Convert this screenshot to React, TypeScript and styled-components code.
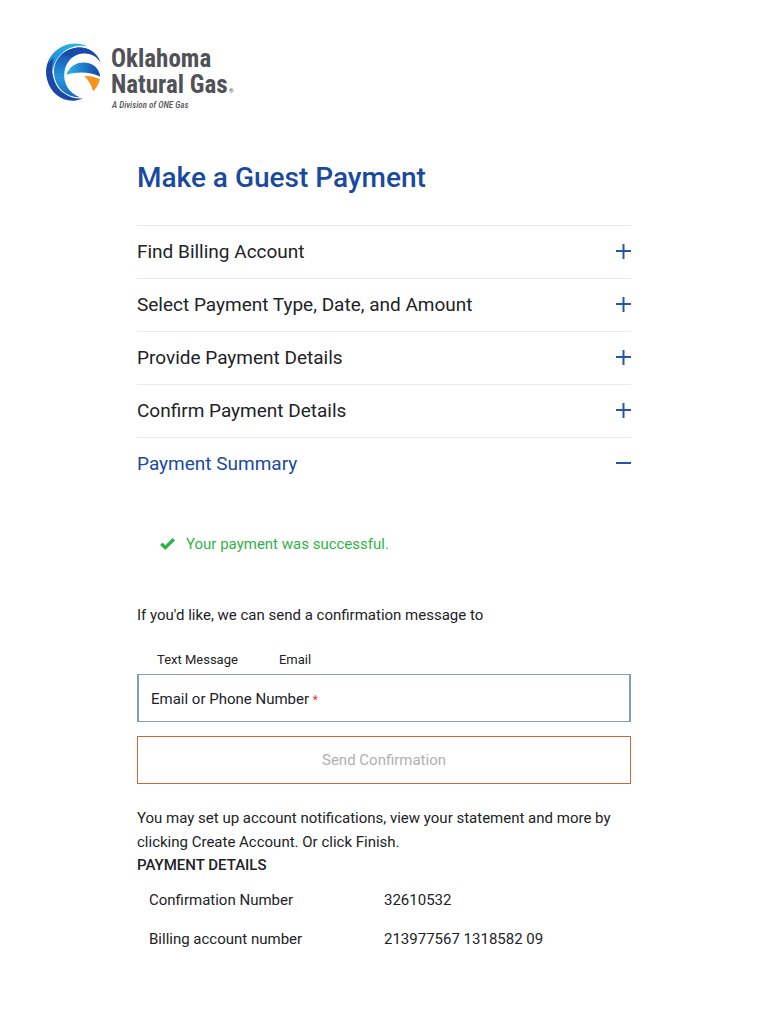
import React, { useState } from "react";
import styled, { createGlobalStyle } from "styled-components";

const GlobalStyle = createGlobalStyle`
  *, *::before, *::after { box-sizing: border-box; }
  body {
    margin: 0;
    background: #fff;
    color: #212326;
    font-family: Roboto, "Liberation Sans", sans-serif;
    font-size: 15px;
    line-height: 24px;
  }
`;

const Header = styled.header`
  padding: 40px 44px 0;
`;

const LogoLink = styled.a`
  display: block;
  width: 196px;
  height: 72px;
`;

const Main = styled.main`
  max-width: 768px;
  margin: 0 auto;
  padding: 44px 137px 52px;
`;

const Title = styled.h1`
  margin: 0 0 25px;
  font-size: 28px;
  line-height: 44px;
  font-weight: 500;
  color: #1a4a9f;
`;

const SectionHeading = styled.h2`
  margin: 0;
  border-top: 1px solid #e9e9eb;
`;

const SectionButton = styled.button<{ $open: boolean }>`
  display: flex;
  align-items: center;
  justify-content: space-between;
  width: 100%;
  height: 52px;
  padding: 0;
  border: 0;
  background: none;
  font: inherit;
  font-size: 19px;
  font-weight: 400;
  text-align: left;
  color: ${(p) => (p.$open ? "#1a4a9f" : "#212326")};
  cursor: pointer;
`;

const Success = styled.p`
  display: flex;
  align-items: center;
  gap: 11px;
  margin: 42px 0 47px;
  padding-left: 23px;
  color: #2fb344;
`;

const Text = styled.p`
  margin: 0;
`;

const Channels = styled.fieldset`
  display: flex;
  gap: 41px;
  margin: 21px 0 2px;
  padding: 0 20px;
  border: 0;
  font-size: 13px;
`;

const Channel = styled.label`
  cursor: pointer;
`;

const HiddenRadio = styled.input`
  position: absolute;
  opacity: 0;
  pointer-events: none;
`;

const Field = styled.div`
  position: relative;
`;

const FieldLabel = styled.label`
  position: absolute;
  top: 13px;
  left: 14px;
  pointer-events: none;
`;

const Required = styled.span`
  font-size: 12px;
  color: #f5304d;
`;

const TextInput = styled.input`
  display: block;
  width: 100%;
  height: 48px;
  padding: 0 14px;
  border: 1px solid #879dc0;
  border-width: 1px 2px;
  border-radius: 0;
  background: #fff;
  font: inherit;
  color: inherit;
`;

const SendButton = styled.button`
  display: block;
  width: 100%;
  height: 48px;
  margin: 14px 0 22px;
  border: 1px solid #dc6238;
  border-radius: 0;
  background: #fff;
  font: inherit;
  color: #b0b0b0;
`;

const DetailsTitle = styled.h3`
  margin: 0;
  font-size: 15px;
  line-height: 22px;
  font-weight: 500;
`;

const Details = styled.table`
  width: 100%;
  margin-top: 4px;
  border-collapse: collapse;
  table-layout: fixed;
`;

const DetailName = styled.th`
  width: 50%;
  height: 39px;
  padding: 0 12px;
  font-weight: 400;
  text-align: left;
`;

const DetailValue = styled.td`
  padding: 0;
`;

function Logo() {
  return (
    <svg width="196" height="72" viewBox="0 0 196 72" role="img" aria-label="Oklahoma Natural Gas">
      <defs>
        <linearGradient id="cyan" x1="0" y1="1" x2="1" y2="0">
          <stop offset="0" stopColor="#1d7fd0" />
          <stop offset="1" stopColor="#2cc0f0" />
        </linearGradient>
        <linearGradient id="leaf" x1="0" y1="0" x2="1" y2="0">
          <stop offset="0" stopColor="#2ab8ec" />
          <stop offset="0.9" stopColor="#164fac" />
        </linearGradient>
        <linearGradient id="ring" x1="0" y1="0" x2="0" y2="1">
          <stop offset="0" stopColor="#1a4ba9" />
          <stop offset="0.2" stopColor="#1c5fbb" />
          <stop offset="0.6" stopColor="#2399de" />
          <stop offset="1" stopColor="#1a66bf" />
        </linearGradient>
      </defs>
      <g transform="translate(-4 -4) scale(0.3333)">
        <path d="M45 47C22 69 13 99 21 130C31 171 65 197 104 194C113 193 121 191 128 187C89 190 53 167 42 131C33 103 36 78 52 59Z" fill="#1848a8" />
        <path d="M143 32C111 15 70 22 43 49C34 59 29 68 26 80C33 73 39 68 42 64C37 78 36 93 38 106C42 71 66 42 101 32C115 28 130 29 143 32Z" fill="url(#cyan)" />
        <path d="M182 80C169 43 131 25 92 39C57 52 39 82 42 114C46 156 80 184 119 184C86 169 70 143 73 111C76 77 101 54 131 52C153 51 171 62 182 80Z" fill="url(#ring)" />
        <path d="M182 80C169 43 131 25 92 39C80 43 70 50 62 58C77 57 91 62 96 64C108 55 119 52 131 52C153 51 171 62 182 80Z" fill="#1a4ba9" />
        <path d="M79 116C88 91 112 76 139 80C162 83 178 99 181 122C149 107 114 106 79 116Z" fill="url(#leaf)" />
        <path d="M132 119Q156 119 180 129Q175 151 159 166Q154 140 132 119Z" fill="#f7941f" />
      </g>
      <g fill="#515258" fontFamily='"Roboto Condensed", "Liberation Sans Narrow", sans-serif' fontWeight="700">
        <text x="67" y="27" fontSize="25">Oklahoma</text>
        <text x="67" y="53" fontSize="25">Natural Gas</text>
        <text x="185" y="53" fontSize="6">®</text>
      </g>
      <text
        x="68"
        y="68"
        fontSize="9"
        fontStyle="italic"
        fontWeight="500"
        fill="#55565b"
        fontFamily='"Roboto Condensed", "Liberation Sans Narrow", sans-serif'
      >
        A Division of ONE Gas
      </text>
    </svg>
  );
}

function ToggleIcon({ open }: { open: boolean }) {
  return (
    <svg width="15" height="16" viewBox="0 0 15 16" fill="none" stroke="#2455a8" strokeWidth="2" aria-hidden="true">
      <path d="M0 7H15" />
      {!open && <path d="M7.5 0V15" />}
    </svg>
  );
}

const sections = [
  "Find Billing Account",
  "Select Payment Type, Date, and Amount",
  "Provide Payment Details",
  "Confirm Payment Details",
  "Payment Summary",
];

const details = [
  ["Confirmation Number", "32610532"],
  ["Billing account number", "213977567 1318582 09"],
];

export default function App() {
  const [contact, setContact] = useState("");
  return (
    <>
      <GlobalStyle />
      <Header>
        <LogoLink href="#">
          <Logo />
        </LogoLink>
      </Header>
      <Main>
        <Title>Make a Guest Payment</Title>
        {sections.map((name, i) => {
          const open = i === sections.length - 1;
          return (
            <SectionHeading key={name}>
              <SectionButton type="button" $open={open} aria-expanded={open}>
                {name}
                <ToggleIcon open={open} />
              </SectionButton>
            </SectionHeading>
          );
        })}
        <Success role="status">
          <svg width="15" height="12" viewBox="0 0 15 12" fill="none" stroke="#2fb344" strokeWidth="3.4" aria-hidden="true">
            <path d="M1.2 5.8L5.3 9.6L13.8 1.3" />
          </svg>
          Your payment was successful.
        </Success>
        <Text>If you'd like, we can send a confirmation message to</Text>
        <Channels aria-label="Confirmation method">
          <Channel>
            <HiddenRadio type="radio" name="channel" value="text" />
            Text Message
          </Channel>
          <Channel>
            <HiddenRadio type="radio" name="channel" value="email" />
            Email
          </Channel>
        </Channels>
        <Field>
          <TextInput id="contact" required value={contact} onChange={(e) => setContact(e.target.value)} />
          {!contact && (
            <FieldLabel htmlFor="contact">
              Email or Phone Number <Required>*</Required>
            </FieldLabel>
          )}
        </Field>
        <SendButton type="button" disabled>
          Send Confirmation
        </SendButton>
        <Text>
          You may set up account notifications, view your statement and more by clicking Create Account. Or click Finish.
        </Text>
        <DetailsTitle>PAYMENT DETAILS</DetailsTitle>
        <Details>
          <tbody>
            {details.map(([name, value]) => (
              <tr key={name}>
                <DetailName scope="row">{name}</DetailName>
                <DetailValue>{value}</DetailValue>
              </tr>
            ))}
          </tbody>
        </Details>
      </Main>
    </>
  );
}
